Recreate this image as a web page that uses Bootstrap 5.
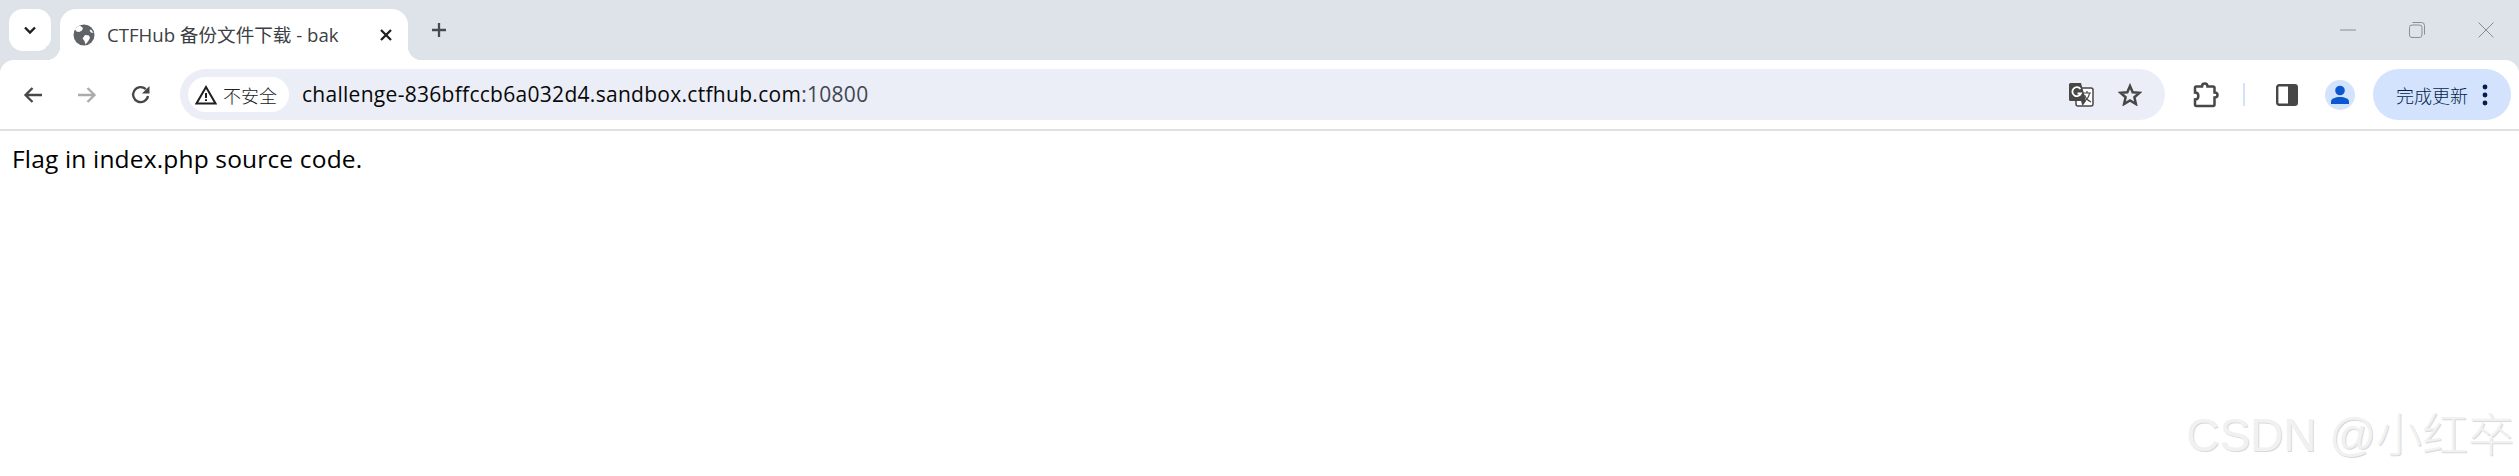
<!DOCTYPE html>
<html lang="zh-CN">
<head>
<meta charset="utf-8">
<title>CTFHub 备份文件下载 - bak</title>
<link href="https://cdn.jsdelivr.net/npm/bootstrap@5.3.0/dist/css/bootstrap.min.css" rel="stylesheet">
<style>
html,body{height:100%;}
body{margin:0;background:#fff;overflow:hidden;position:relative;font-family:"Open Sans","Noto Sans CJK SC",sans-serif;color:#000;}
.strip{height:60px;background:#dee3ea;padding:9px 0 0 9px;}
.tabmenu{width:42px;height:42px;background:#fff;border-radius:14px;}
.tabshape{width:348px;height:51px;margin-left:9px;background:#fff;border-radius:16px 16px 0 0;position:relative;padding:0 15px 0 13px;}
.tabshape::before,.tabshape::after{content:"";position:absolute;bottom:0;width:14px;height:14px;}
.tabshape::before{left:-14px;background:radial-gradient(circle at 0 0,#dee3ea 14px,#fff 14.5px);}
.tabshape::after{right:-14px;background:radial-gradient(circle at 100% 0,#dee3ea 14px,#fff 14.5px);}
.tabtitle{font-size:18.6px;color:#3c4043;margin-left:12px;white-space:nowrap;letter-spacing:0;width:238px;}
.plusbox{width:30px;height:30px;margin-left:15px;margin-top:6px;}
.winbox{width:69px;height:30px;}
.winctrls{margin-right:-1px;padding-right:0;margin-top:6px;}
.tools{height:69px;background:#fff;border-radius:14px 14px 0 0;padding:0 8px 0 6px;position:relative;}
.toolwrap{background:#dee3ea;}
.navbtn{width:54px;height:42px;}
.omni{height:51px;width:1986px;margin-left:12px;background:#ebeef7;border-radius:26px;padding:0 0 0 8px;}
.chip{width:101px;height:35px;background:#fff;border-radius:18px;padding-left:7px;font-size:17px;color:#202124;white-space:nowrap;}
.chiptext{margin-left:6px;font-family:"Noto Sans CJK SC",sans-serif;font-size:18px;font-weight:300;line-height:1;}
.urltext{font-size:21px;margin-left:13px;color:#080808;white-space:nowrap;letter-spacing:.29px;width:1070px;flex:0 0 auto;}
.urlport{color:#3f4650;}
.omniend{margin-left:auto;padding-right:23px;gap:24px;}
.extbtn{margin-left:25px;width:32px;}
.seper{width:2px;height:23px;background:#d3e3fd;margin:0 0 0 21px;}
.sidebtn{width:26px;margin-left:29px;}
.avatar{width:30px;height:30px;margin-left:25px;}
.upd{width:138px;height:51px;margin-left:18px;background:#d3e3fd;border-radius:26px;color:#041e49;font-family:"Noto Sans CJK SC",sans-serif;font-size:18px;font-weight:300;padding-left:23px;white-space:nowrap;line-height:1;}
.updmenu{margin-left:10px;}
.rule{height:2px;background:#dfe1e4;}
.pagetext{font-size:24.5px;line-height:1;margin:0;padding:16px 0 0 12px;letter-spacing:.17px;color:#000;}
.wmark{position:absolute;right:5px;bottom:18px;font-family:"Liberation Sans","Noto Sans CJK SC",sans-serif;font-size:46px;line-height:1;color:#f1f1f1;text-shadow:1px 1px 0 #d9d9d9;white-space:nowrap;font-weight:300;}
svg{display:block;}
</style>
</head>
<body>
<div class="strip d-flex align-items-start">
  <div class="tabmenu d-flex align-items-center justify-content-center">
    <svg width="14" height="10" viewBox="0 0 14 10"><path d="M2 2.5 7 7.5 12 2.5" fill="none" stroke="#1f1f1f" stroke-width="2.4"/></svg>
  </div>
  <div class="tabshape d-flex align-items-center">
    <svg width="22" height="22" viewBox="0 0 22 22"><circle cx="11" cy="11" r="10.5" fill="#5f6368"/><path d="M7 1.6 10 4 9 6.5 6 8 3.5 7.5 2 5.5C3.300 3.800 5 2.400 7 1.600ZM12 11 16 11.500 17 14 15 17.500 12.500 20.500 11.500 17 9.500 14.500ZM18 5.500 20.500 9 18 8.500 16.500 6.500Z" fill="#fff"/></svg>
    <span class="tabtitle">CTFHub 备份文件下载 - bak</span>
    <svg class="ms-auto" width="14" height="14" viewBox="0 0 14 14"><path d="M2 2 12 12M12 2 2 12" stroke="#1f1f1f" stroke-width="2.300"/></svg>
  </div>
  <div class="plusbox ms-3 d-flex align-items-center justify-content-center">
    <svg width="16" height="16" viewBox="0 0 16 16"><path d="M8 1V15M1 8H15" stroke="#474a4f" stroke-width="2.300"/></svg>
  </div>
  <div class="winctrls ms-auto d-flex">
    <div class="winbox d-flex align-items-center justify-content-center"><svg width="16" height="2" viewBox="0 0 16 2"><path d="M0 1H16" stroke="#8a8d91" stroke-width="1"/></svg></div>
    <div class="winbox d-flex align-items-center justify-content-center"><svg width="16" height="16" viewBox="0 0 16 16" fill="none" stroke="#8a8d91"><rect x=".5" y="3" width="12.500" height="12.500" rx="2.500"/><path d="M3.500 .5H12.500A3 3 0 0 1 15.500 3.500V12.500"/></svg></div>
    <div class="winbox d-flex align-items-center justify-content-center"><svg width="16" height="16" viewBox="0 0 16 16"><path d="M.5 .5 15.500 15.500M15.500 .5 .5 15.500" stroke="#8a8d91" stroke-width="1"/></svg></div>
  </div>
</div>
<div class="toolwrap">
<div class="tools d-flex align-items-center">
  <div class="navbtn d-flex align-items-center justify-content-center">
    <svg width="20" height="18" viewBox="0 0 20 18"><path d="M19 9H3M9.500 2 2.500 9 9.500 16" fill="none" stroke="#474747" stroke-width="2.300"/></svg>
  </div>
  <div class="navbtn d-flex align-items-center justify-content-center">
    <svg width="20" height="18" viewBox="0 0 20 18"><path d="M1 9H17M10.500 2 17.500 9 10.500 16" fill="none" stroke="#ababab" stroke-width="2.300"/></svg>
  </div>
  <div class="navbtn d-flex align-items-center justify-content-center">
    <svg width="20" height="20" viewBox="0 0 20 20"><path d="M17 11A7.500 7.500 0 1 1 14.800 4.200" fill="none" stroke="#474747" stroke-width="2.300"/><path d="M18.500 1V8.500H11Z" fill="#474747"/></svg>
  </div>
  <div class="omni d-flex align-items-center">
    <div class="chip d-flex align-items-center">
      <svg width="22" height="20" viewBox="0 0 22 20"><path d="M11 2 20.500 18.500H1.500Z" fill="none" stroke="#1f1f1f" stroke-width="2"/><path d="M11 8V13M11 14.300V16" stroke="#1f1f1f" stroke-width="2"/></svg>
      <span class="chiptext">不安全</span>
    </div>
    <span class="urltext">challenge-836bffccb6a032d4.sandbox.ctfhub.com<span class="urlport">:10800</span></span>
    <div class="omniend d-flex align-items-center">
      <svg width="26" height="26" viewBox="0 0 26 26"><rect x="8" y="6" width="17" height="18" rx="2" fill="#fff" stroke="#474747" stroke-width="1.500"/><path d="M2.500 1H13L18 19H2.500A1.500 1.500 0 0 1 1 17.500V2.500A1.500 1.500 0 0 1 2.500 1Z" fill="#474747"/><path d="M13 19 14.500 24 18 19Z" fill="#474747"/><path d="M12.500 7A4.500 4.500 0 1 0 13 11.500H9.500" fill="none" stroke="#fff" stroke-width="1.800"/><path d="M15 11H23M19 9V11M21.500 11C21 15 18.500 18 15.500 20M16.500 13C17.500 16 20 18.500 23 20" fill="none" stroke="#474747" stroke-width="1.200"/></svg>
      <svg width="24" height="23" viewBox="0 0 24 23"><path d="M12 3 14.700 9.200 21.500 9.800 16.400 14.300 17.900 21 12 17.500 6.100 21 7.600 14.300 2.500 9.800 9.300 9.200Z" fill="none" stroke="#474747" stroke-width="2.500" stroke-linejoin="miter"/></svg>
    </div>
  </div>
  <div class="extbtn d-flex justify-content-center">
    <svg width="26" height="26" viewBox="0 0 26 26"><path d="M3 4.500H9C9 .5 14.500 .5 14.500 4.500H20A1.500 1.500 0 0 1 21.500 6V10.500C25.500 10.500 25.500 15.500 21.500 15.500V22.500A1.500 1.500 0 0 1 20 24H3.500A1.500 1.500 0 0 1 2 22.500V17.500C6.500 17.500 6.500 10.500 2 10.500V5.500A1 1 0 0 1 3 4.500Z" fill="none" stroke="#474747" stroke-width="2.500"/></svg>
  </div>
  <div class="seper"></div>
  <div class="sidebtn d-flex justify-content-center">
    <svg width="22" height="22" viewBox="0 0 22 22"><rect x="1.200" y="1.200" width="19.600" height="19.600" rx="2" fill="#fff" stroke="#474747" stroke-width="2.400"/><rect x="12" y="1" width="9" height="20" fill="#474747"/></svg>
  </div>
  <div class="avatar">
    <svg width="30" height="30" viewBox="0 0 30 30"><circle cx="15" cy="15" r="15" fill="#d3e3fd"/><circle cx="15" cy="10.500" r="4.800" fill="#0b57d0"/><path d="M6 24V21.500C6 18.500 10.500 17 15 17S24 18.500 24 21.500V24Z" fill="#0b57d0"/></svg>
  </div>
  <div class="upd d-flex align-items-center">
    <span>完成更新</span>
    <svg class="updmenu" width="14" height="22" viewBox="0 0 14 22"><circle cx="7" cy="3" r="2.400" fill="#041e49"/><circle cx="7" cy="11" r="2.400" fill="#041e49"/><circle cx="7" cy="19" r="2.400" fill="#041e49"/></svg>
  </div>
</div>
</div>
<div class="rule"></div>
<p class="pagetext">Flag in index.php source code.</p>
<div class="wmark">CSDN @小红卒</div>
<script src="https://cdn.jsdelivr.net/npm/bootstrap@5.3.0/dist/js/bootstrap.bundle.min.js"></script>
</body>
</html>
